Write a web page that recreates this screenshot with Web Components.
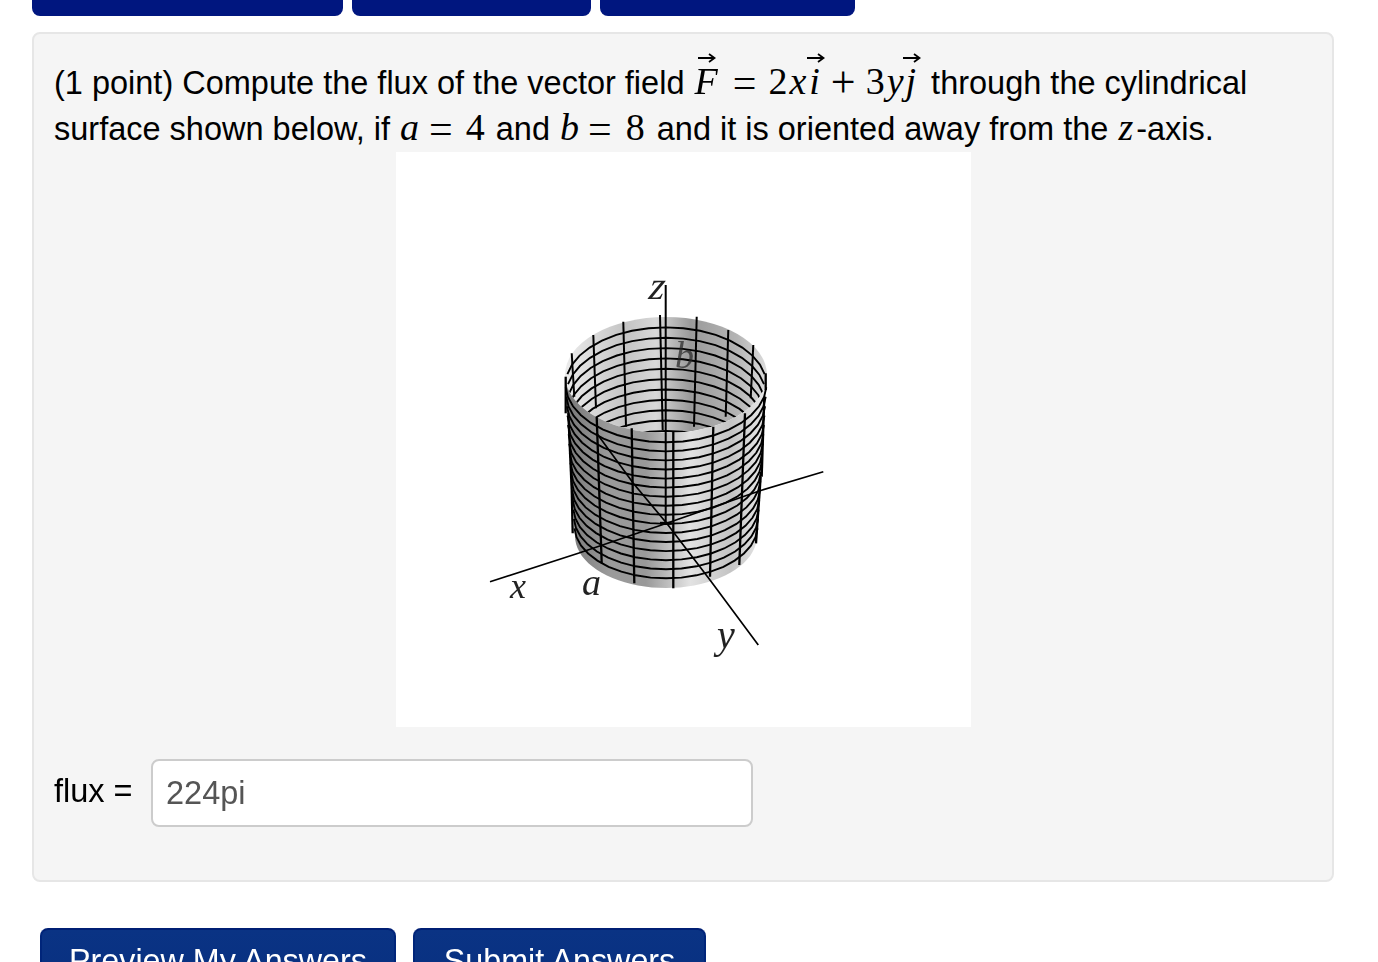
<!DOCTYPE html>
<html lang="en"><head><meta charset="utf-8"><title>Flux</title>
<style>
html,body{margin:0;padding:0;background:#fff;height:962px;overflow:hidden}
body{font-family:"Liberation Sans",Arial,sans-serif;color:#000}
</style></head><body>
<wb-page>
  <wb-tabs slot="tabs"><wb-tab style="width:311px"></wb-tab><wb-tab style="width:239px"></wb-tab><wb-tab style="width:255px"></wb-tab></wb-tabs>
  <wb-card>
    <wb-problem>(1 point) Compute the flux of the vector field <wb-m style="margin-left:1px"><wb-vec>F</wb-vec></wb-m><wb-m op style="margin:0 12px 0 15px">=</wb-m><wb-m>2<i style="margin-left:2px">x</i><wb-vec style="margin-left:3px">i</wb-vec></wb-m><wb-m op style="font-size:44px;margin:0 10px 0 11px">+</wb-m><wb-m>3<i style="margin-left:2px">y</i><wb-vec style="margin-left:2px">j</wb-vec></wb-m><span style="margin-left:15px">through the cylindrical</span><br>surface shown below, if <wb-m style="margin-left:1px"><i>a</i></wb-m><wb-m op style="margin:0 13px 0 10px">=</wb-m><wb-m style="margin-right:2px">4</wb-m> and <wb-m style="margin-left:1px"><i>b</i></wb-m><wb-m op style="margin:0 14px 0 9px">=</wb-m><wb-m style="margin-right:3px">8</wb-m> and it is oriented away from the <wb-m style="margin:0 3px 0 1px"><i>z</i></wb-m>-axis.</wb-problem>
    <wb-figure></wb-figure>
    <wb-answer label="flux =" value="224pi"></wb-answer>
  </wb-card>
  <wb-actions><wb-btn style="width:356px">Preview My Answers</wb-btn><wb-btn style="width:293px">Submit Answers</wb-btn></wb-actions>
</wb-page>
<script>
function def(name,css,html){
  customElements.define(name,class extends HTMLElement{
    constructor(){super();const s=this.attachShadow({mode:'open'});s.innerHTML='<style>'+css+'</style>'+(typeof html==='function'?html(this):html);}
  });
}
def('wb-page',':host{display:block;padding:0 44px 0 32px}','<slot name="tabs"></slot><slot></slot>');
def('wb-tabs',':host{display:flex;gap:9px;height:16px;margin-bottom:16px}','<slot></slot>');
def('wb-tab',':host{display:block;height:16px;background:#00167f;border-radius:0 0 8px 8px}','');
def('wb-card',':host{display:block;box-sizing:border-box;height:850px;background:#f5f5f5;border:2px solid #e6e6e6;border-radius:8px;padding:26px 20px 0}','<slot></slot>');
def('wb-problem',':host{display:block;font-size:32.5px;line-height:46px;white-space:nowrap}','<slot></slot>');
def('wb-m',`:host{display:inline;font-family:"Liberation Serif","Times New Roman",serif;font-size:38px;line-height:0}
:host([op]){font-size:42px;vertical-align:-3px}
::slotted(i){font-style:italic}`,'<slot></slot>');
def('wb-vec',`:host{display:inline-block;position:relative;font-style:italic;line-height:0}
svg{position:absolute;left:50%;margin-left:-9px;top:-29px;width:19px;height:12px}`,
'<slot></slot><svg viewBox="0 0 19 12"><path d="M1 6H17M12 2L17.5 6L12 10" fill="none" stroke="#000" stroke-width="1.8"/></svg>');
def('wb-figure',`:host{display:block;width:575px;height:575px;margin:0 auto;background:#fff}
svg{display:block;width:575px;height:575px}
text{font-family:"Liberation Serif",serif;font-style:italic;fill:#222}`,()=>{
  const Z=(x,y)=>[500+x/3,270+y/3];
  const P=a=>a.map(p=>{const q=Z(p[0],p[1]);return q[0].toFixed(1)+' '+q[1].toFixed(1)}).join(' L');
  let s='';
  const top={cx:666,cy:375,rx:101,ry:58}, bot={cx:666,cy:536,rx:91,ry:52};
  const lerp=(t,k)=>top[k]+(bot[k]-top[k])*t;
  const arc=(t,a0,a1,n=40)=>{let d='';for(let i=0;i<=n;i++){const a=a0+(a1-a0)*i/n;
    const x=lerp(t,'cx')+lerp(t,'rx')*Math.cos(a),y=lerp(t,'cy')+lerp(t,'ry')*Math.sin(a);
    d+=(i?'L':'M')+x.toFixed(1)+' '+y.toFixed(1);}return d;};
  const frontShape=arc(0,Math.PI,0)+' '+arc(1,0,Math.PI).replace('M','L')+'Z';
  s+=`<defs>
  <linearGradient id="gb" x1="565" x2="767" gradientUnits="userSpaceOnUse" y1="0" y2="0"><stop offset="0" stop-color="#ececec"/><stop offset=".3" stop-color="#c4c4c4"/><stop offset=".45" stop-color="#d8d8d8"/><stop offset=".62" stop-color="#9a9a9a"/><stop offset=".85" stop-color="#b4b4b4"/><stop offset="1" stop-color="#dcdcdc"/></linearGradient>
  <linearGradient id="gf" x1="565" x2="767" gradientUnits="userSpaceOnUse" y1="0" y2="0"><stop offset="0" stop-color="#777"/><stop offset=".22" stop-color="#9a9a9a"/><stop offset=".4" stop-color="#999"/><stop offset=".62" stop-color="#e2e2e2"/><stop offset=".82" stop-color="#c4c4c4"/><stop offset="1" stop-color="#ececec"/></linearGradient>
  <filter id="bl" x="-5%" y="-5%" width="110%" height="110%"><feGaussianBlur stdDeviation=".5"/></filter>
  <clipPath id="cb"><ellipse cx="666" cy="375" rx="101" ry="58"/></clipPath></defs>`;
  let g=`<ellipse cx="666" cy="375" rx="101" ry="58" fill="url(#gb)"/>`;
  for(let i=1;i<=12;i++){const t=i*0.062;g+=`<path d="${arc(t,Math.PI*1.06,Math.PI*1.94,16)}" fill="none" stroke="#000" stroke-width="1.9" clip-path="url(#cb)"/>`;}
  [[215,250,380],[280,195,415],[370,155,470],[480,135,480],[590,140,470],[685,180,440],[760,225,385]].forEach(v=>{g+=`<path d="M${P([[v[0],v[1]],[v[0]+(v[0]<497?8:-8),v[2]]])}" stroke="#000" stroke-width="2"/>`});
  g+=`<path d="M${P([[497,45],[497,480]])}" stroke="#000" stroke-width="2"/>`;
  g+=`<path d="${frontShape}" fill="url(#gf)"/>`;
  for(let i=0;i<=15;i++){const t=0.06+i*0.0585;g+=`<path d="${arc(t,Math.PI*.985,Math.PI*.015,18)}" fill="none" stroke="#000" stroke-width="1.9"/>`;}
  [[197,320,430,197,197],[205,430,660,205,215],[215,660,790,215,218],[290,440,880,290,305],[395,475,940,395,403],[520,485,955,520,520],[640,470,920,640,630],[735,430,885,735,718],[790,380,620,793,785],[782,620,820,782,768],[797,310,360,797,797]].forEach(v=>{g+=`<path d="M${P([[v[3],v[1]],[v[4],v[2]]])}" stroke="#000" stroke-width="2.3"/>`});
  g+=`<path d="M${P([[497,485],[497,760]])}" stroke="#000" stroke-width="2"/>`;
  g+=`<path d="M${P([[-30,935],[235,850],[500,760]])}" fill="none" stroke="#000" stroke-width="1.7"/>`;
  g+=`<path d="M${P([[500,760],[780,662],[970,605]])}" fill="none" stroke="#000" stroke-width="1.7"/>`;
  g+=`<path d="M${P([[290,490],[400,640],[500,760],[630,930],[775,1125]])}" fill="none" stroke="#000" stroke-width="1.7"/>`;
  g+=`<path d="M${P([[480,760],[515,760]])}" stroke="#000" stroke-width="3"/>`;
  s+=`<g filter="url(#bl)">${g}</g>`;
  s+=`<g filter="url(#bl)"><text x="645" y="299" font-size="40" transform="skewX(-8) translate(45 0)">z</text><text x="675" y="368" font-size="38" fill-opacity=".7">b</text><text x="510" y="598" font-size="36">x</text><text x="582" y="595" font-size="38">a</text><text x="717" y="648" font-size="40">y</text></g>`;
  return `<svg viewBox="396 152 575 575" xmlns="http://www.w3.org/2000/svg">${s}</svg>`;
});
def('wb-answer',`:host{display:flex;align-items:center;margin-top:32px;font-size:32.5px}
span{width:97px;flex:none;position:relative;top:-2px}
div{box-sizing:border-box;width:602px;height:68px;background:#fff;border:2px solid #ccc;border-radius:8px;padding:0 13px;display:flex;align-items:center;color:#555}`,
el=>`<span>${el.getAttribute('label')}</span><div>${el.getAttribute('value')}</div>`);
def('wb-actions',':host{display:flex;gap:17px;margin:46px 0 0 8px}','<slot></slot>');
def('wb-btn',`:host{display:block;box-sizing:border-box;height:64px;border-radius:8px;background:linear-gradient(#0a3384,#083080);border:2px solid #00257a;border-top-color:#001f74;color:#fff;font-size:32.3px;text-align:center;line-height:62px;white-space:nowrap}`,'<slot></slot>');
</script>
</body></html>
